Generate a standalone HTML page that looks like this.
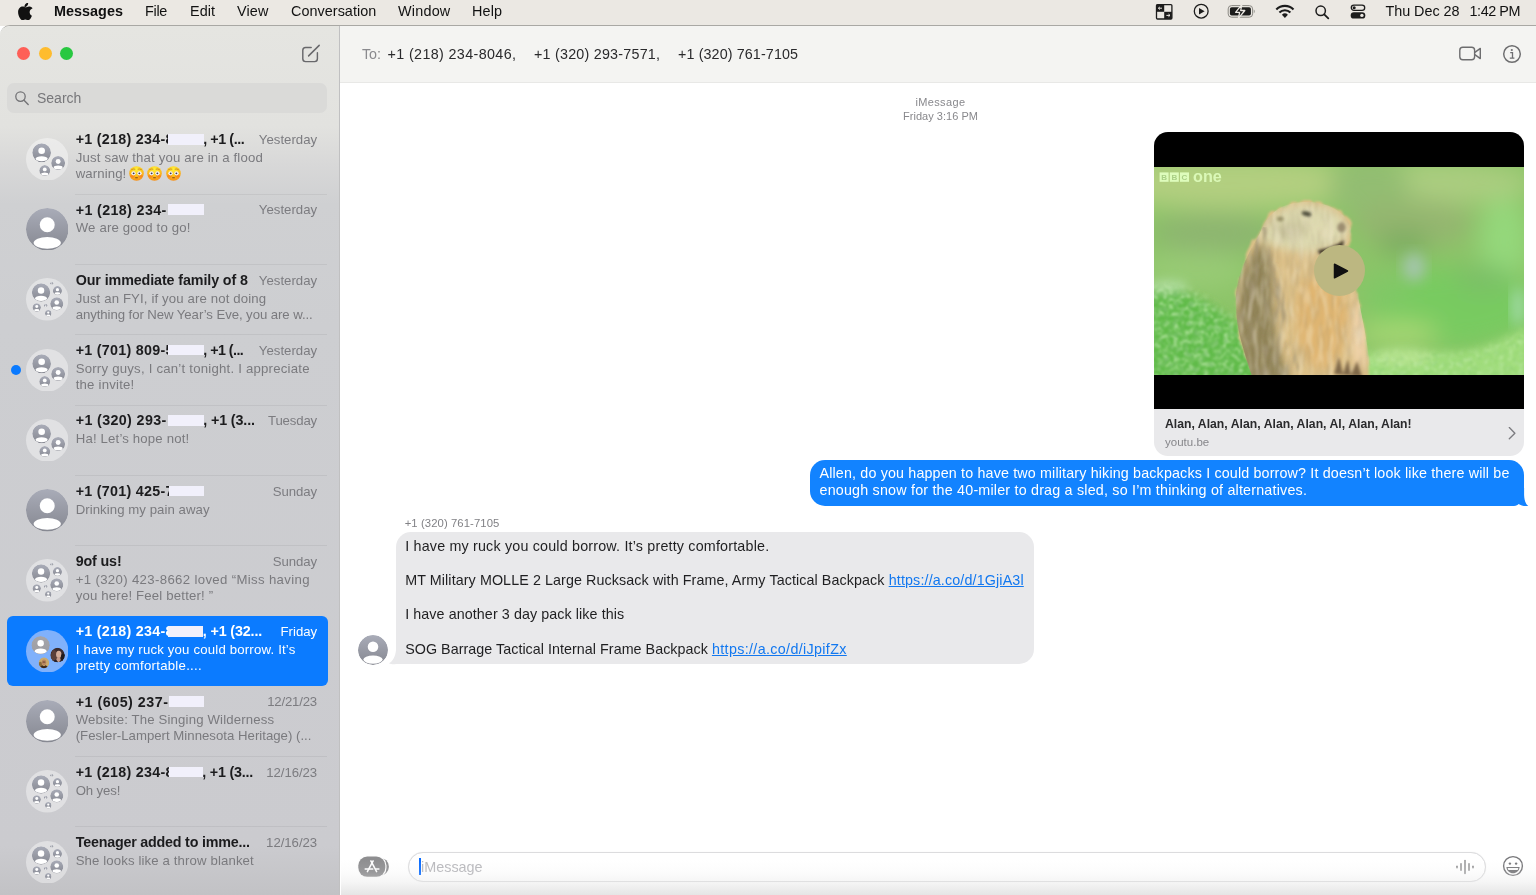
<!DOCTYPE html>
<html lang="en">
<head>
<meta charset="utf-8">
<title>Messages</title>
<style>
html,body{margin:0;padding:0}
body{width:1536px;height:895px;overflow:hidden;position:relative;background:#fff;font-family:"Liberation Sans",sans-serif;color:#1d1d1f;-webkit-font-smoothing:antialiased}
*{box-sizing:border-box}
.abs{position:absolute}
/* menu bar */
#menubar{position:absolute;left:0;top:0;width:1536px;height:26px;background:#ebe8e3}
#menubar .mi{position:absolute;top:0;height:24px;line-height:23px;color:#111;white-space:nowrap}
#menubar .b{font-weight:bold}
/* window */
#win{position:absolute;left:0;top:25px;width:1536px;height:870px;border-top:1px solid #a9a8a4;border-top-left-radius:10px;overflow:hidden;background:#fff}
#side{position:absolute;left:0;top:0;width:340px;height:870px;background:linear-gradient(180deg,#e5e5e1 0px,#e2e2df 100px,#d8d8d8 138px,#cfd0d2 178px,#cdced1 300px,#cbcbcf 820px,#c2c2c5 869px);border-right:1px solid #c0c0c1}
#toolbar{position:absolute;left:340px;top:0;width:1196px;height:57px;background:#f4f4f2;border-bottom:1px solid #e8e8e6}
.tl{position:absolute;top:21px;width:13px;height:13px;border-radius:50%}
#search{position:absolute;left:7px;top:57px;width:320px;height:30px;border-radius:7px;background:#dadad8}
#search span{position:absolute;left:30px;top:0;line-height:30px;font-size:14px;color:#77777a}
/* rows */
.row{position:absolute;left:0;width:340px;height:70px}
.row .av{position:absolute}
.nm{position:absolute;top:6.3px;font-weight:bold;line-height:18px;color:#1c1c1e;white-space:nowrap}
.dt{position:absolute;top:7px;line-height:18px;color:#7c7c80;white-space:nowrap}
.p1,.p2{position:absolute;line-height:16px;color:#7a7a7e;white-space:nowrap}
.p1{top:26px}
.p2{top:42px}
.sep{position:absolute;left:75px;right:13px;top:69.8px;height:1px;background:rgba(0,0,0,0.055)}
.red{position:absolute;top:10px;height:10.6px;background:#f1f0fb}
.sel .nm,.sel .dt,.sel .p1,.sel .p2{color:#fff}
.selbg{position:absolute;left:6.6px;top:0.2px;width:321.8px;height:70px;border-radius:6px;background:#0b7bff}
.dot{position:absolute;left:11px;top:30px;width:10px;height:10px;border-radius:50%;background:#0a7aff}
.emo{position:absolute;top:41.8px}
/* chat */
.ctr{position:absolute;left:340px;width:1196px;text-align:center;font-size:11px;color:#88888c;line-height:14px}
.tb{position:absolute;top:45px;line-height:18px;color:#2a2a2c;white-space:nowrap}
.lbl{color:#88888c;line-height:14px;white-space:nowrap}
.bub{position:absolute;line-height:17px;white-space:nowrap}
a{color:#1278f0;text-decoration:underline}
</style>
</head>
<body>
<div id="screen" style="will-change:transform;position:absolute;left:0;top:0;width:1536px;height:895px;overflow:hidden">
<svg width="0" height="0" style="position:absolute">
<defs>
<linearGradient id="pg" x1="0" y1="0" x2="0" y2="1"><stop offset="0" stop-color="#a9acb8"/><stop offset="1" stop-color="#868891"/></linearGradient>
<radialGradient id="eg" cx="0.5" cy="0.22" r="0.85"><stop offset="0" stop-color="#fff23a"/><stop offset="0.45" stop-color="#fdc81e"/><stop offset="1" stop-color="#f5861a"/></radialGradient>
<linearGradient id="pgs" x1="0" y1="0" x2="0" y2="1"><stop offset="0" stop-color="#a6a6ab"/><stop offset="1" stop-color="#9c9ca2"/></linearGradient>
<clipPath id="pc"><circle r="50"/></clipPath>
</defs>
</svg>

<div id="menubar">
  <svg class="abs" style="left:17.5px;top:2.8px" width="15.5" height="17.6" viewBox="0 0 170 200"><path fill="#111" d="M150 68c-1 1-21 12-21 37 0 29 25 39 26 40 0 1-4 14-13 27-8 12-17 24-30 24s-17-8-32-8c-15 0-20 8-32 8s-21-11-30-25C7 155-2 128-2 103c0-41 27-63 53-63 14 0 26 9 34 9 8 0 21-10 37-10 6 0 27 1 41 21zM102 30c7-8 11-19 11-30 0-2 0-3 0-4-11 0-24 7-31 16-6 7-12 18-12 29 0 2 0 3 1 4 1 0 2 0 3 0 9 0 21-6 28-15z"/></svg>
  <div class="mi b" style="left:54px;font-size:14.4px;letter-spacing:0.022px">Messages</div><div class="mi" style="left:145px;font-size:14.4px;letter-spacing:-0.301px">File</div><div class="mi" style="left:190px;font-size:14.4px;letter-spacing:0.062px">Edit</div><div class="mi" style="left:237px;font-size:14.4px;letter-spacing:0.116px">View</div><div class="mi" style="left:291px;font-size:14.4px;letter-spacing:0.041px">Conversation</div><div class="mi" style="left:398px;font-size:14.4px;letter-spacing:0.217px">Window</div><div class="mi" style="left:472px;font-size:14.4px;letter-spacing:0.128px">Help</div><div class="mi" style="left:1385.5px;font-size:14.4px;letter-spacing:-0.049px">Thu Dec 28</div><div class="mi" style="left:1469.5px;font-size:14.4px;letter-spacing:-0.438px">1:42 PM</div>

  <svg class="abs" style="left:1155px;top:3px" width="18" height="18" viewBox="0 0 18 18"><rect x="1.5" y="1.6" width="15.4" height="14.4" rx="1" fill="#ebe8e3" stroke="#1c1c1c" stroke-width="1.3"/><rect x="1.5" y="1.6" width="7.7" height="7.2" fill="#1c1c1c"/><rect x="9.2" y="8.8" width="7.7" height="7.2" fill="#1c1c1c"/><path d="M3.4 5.2h3.6M3.4 5.2l1.5-1.3M3.4 5.2l1.5 1.3M15 12.4h-3.6M15 12.4l-1.5-1.3M15 12.4l-1.5 1.3" stroke="#ebe8e3" stroke-width="1" fill="none"/></svg>
  <svg class="abs" style="left:1192px;top:2px" width="18" height="18" viewBox="0 0 18 18"><circle cx="9.2" cy="9.2" r="6.9" fill="none" stroke="#1c1c1c" stroke-width="1.3"/><path d="M7 5.9 L12.6 9.2 L7 12.5 Z" fill="#1c1c1c"/></svg>
  <svg class="abs" style="left:1226px;top:3px" width="32" height="17" viewBox="0 0 32 17"><rect x="2.2" y="2.6" width="24.4" height="11.6" rx="3.3" fill="none" stroke="#8a8883" stroke-width="1"/><rect x="3.9" y="4.3" width="21" height="8.2" rx="1.8" fill="#1c1c1c"/><path d="M27.8 6.6 V10.2 C29 9.8 29 7 27.8 6.6Z" fill="#8a8883"/><path d="M15.8 1.6 L9.6 9.3 H13.6 L12.4 15.4 L18.8 7.5 H14.7 Z" fill="#1c1c1c" stroke="#ebe8e3" stroke-width="1.3" stroke-linejoin="round"/></svg>
  <svg class="abs" style="left:1274px;top:3px" width="22" height="16" viewBox="0 0 22 16"><g fill="none" stroke="#1c1c1c" stroke-width="2.1" stroke-linecap="butt"><path d="M2.3 6.4 A12.2 12.2 0 0 1 19.5 6.4"/><path d="M5.4 9.5 A7.8 7.8 0 0 1 16.4 9.5"/></g><path d="M10.9 14.9 L7.9 11.7 A4.3 4.3 0 0 1 13.9 11.7 Z" fill="#1c1c1c"/></svg>
  <svg class="abs" style="left:1313px;top:3px" width="18" height="18" viewBox="0 0 18 18"><circle cx="7.7" cy="7.8" r="4.7" fill="none" stroke="#1c1c1c" stroke-width="1.5"/><path d="M11.2 11.3 L15.3 15.4" stroke="#1c1c1c" stroke-width="1.8" stroke-linecap="round"/></svg>
  <svg class="abs" style="left:1349px;top:3px" width="18" height="17" viewBox="0 0 18 17"><rect x="2.3" y="2.1" width="13.4" height="5.3" rx="2.65" fill="none" stroke="#1c1c1c" stroke-width="1.3"/><circle cx="5.2" cy="4.75" r="1.5" fill="#1c1c1c"/><rect x="1.7" y="9.2" width="14.6" height="6.4" rx="3.2" fill="#1c1c1c"/><circle cx="12.9" cy="12.4" r="1.7" fill="#ebe8e3"/></svg>
</div>

<div id="win">
  <div id="side">
    <div class="tl" style="left:17px;background:#fe5f57"></div>
    <div class="tl" style="left:38.5px;background:#febc2e"></div>
    <div class="tl" style="left:60px;background:#28c840"></div>
    <div id="search"><span>Search</span></div>

    <svg class="abs" style="left:301px;top:17px" width="20" height="20" viewBox="0 0 20 20"><path d="M10.2 4.5 H4.6 A2.8 2.8 0 0 0 1.8 7.3 V15.8 A2.8 2.8 0 0 0 4.6 18.6 H13.6 A2.8 2.8 0 0 0 16.4 15.8 V9.8" fill="none" stroke="#68686b" stroke-width="1.45" stroke-linecap="round"/><path d="M7.6 12.9 L18.2 2.4" fill="none" stroke="#68686b" stroke-width="1.5" stroke-linecap="round"/></svg>
    <svg class="abs" style="left:14px;top:63.5px" width="16" height="16" viewBox="0 0 16 16"><circle cx="6.5" cy="6.6" r="4.7" fill="none" stroke="#737376" stroke-width="1.3"/><path d="M10 10.2 L14.2 14.4" stroke="#737376" stroke-width="1.4" stroke-linecap="round"/></svg>
  </div>
  <div id="toolbar"></div>
</div>

<div id="rows" style="position:absolute;left:0;top:0;width:340px;height:895px;overflow:hidden">
<div class="row" style="top:124.0px"><svg class="av" style="left:25.7px;top:13.7px" width="42.5" height="42.5" viewBox="-50 -50 100 100"><circle r="50" fill="rgba(255,255,255,0.40)"/><g transform="translate(-13.18,-15.29) scale(0.4424)"><g clip-path="url(#pc)"><circle r="50" fill="url(#pg)"/><circle cx="0" cy="-10.6" r="17.6" fill="#fff"/><ellipse cx="0" cy="32" rx="32" ry="13.8" fill="#fff"/></g></g><g transform="translate(25.65,8.94) scale(0.3294)"><g clip-path="url(#pc)"><circle r="50" fill="url(#pg)"/><circle cx="0" cy="-10.6" r="17.6" fill="#fff"/><ellipse cx="0" cy="32" rx="32" ry="13.8" fill="#fff"/></g></g><g transform="translate(-5.88,26.59) scale(0.2588)"><g clip-path="url(#pc)"><circle r="50" fill="url(#pg)"/><circle cx="0" cy="-10.6" r="17.6" fill="#fff"/><ellipse cx="0" cy="32" rx="32" ry="13.8" fill="#fff"/></g></g></svg><div class="nm" style="left:75.7px;font-size:14.3px;letter-spacing:0.276px">+1 (218) 234-8</div><div class="nm" style="left:203.3px;font-size:14.3px;letter-spacing:-0.438px">, +1 (...</div><div class="red" style="left:168px;width:35.8px"></div><div class="dt" style="left:258.8px;font-size:13.2px;letter-spacing:0.022px">Yesterday</div><div class="p1" style="left:75.7px;font-size:13.2px;letter-spacing:0.172px">Just saw that you are in a flood</div><div class="p2" style="left:75.7px;font-size:13.2px;letter-spacing:0.101px">warning!</div><svg class="emo" style="left:128.8px" width="15" height="15" viewBox="0 0 32 32"><circle cx="16" cy="16" r="15.6" fill="url(#eg)"/><ellipse cx="7.5" cy="21.5" rx="5" ry="3.6" fill="#f4601e" opacity="0.45"/><ellipse cx="24.5" cy="21.5" rx="5" ry="3.6" fill="#f4601e" opacity="0.45"/><path d="M5.5 7.6 Q9 5.2 12.6 6.6 M19.4 6.6 Q23 5.2 26.5 7.6" stroke="#b9731a" stroke-width="1.5" fill="none" stroke-linecap="round"/><circle cx="9.6" cy="15.6" r="4.6" fill="#f4f2fb"/><circle cx="22.4" cy="15.6" r="4.6" fill="#f4f2fb"/><circle cx="9.9" cy="15.6" r="2" fill="#3e3a4a"/><circle cx="22.1" cy="15.6" r="2" fill="#3e3a4a"/><rect x="12.8" y="24" width="6.4" height="1.9" rx="0.95" fill="#8a4a12"/></svg><svg class="emo" style="left:147.2px" width="15" height="15" viewBox="0 0 32 32"><circle cx="16" cy="16" r="15.6" fill="url(#eg)"/><ellipse cx="7.5" cy="21.5" rx="5" ry="3.6" fill="#f4601e" opacity="0.45"/><ellipse cx="24.5" cy="21.5" rx="5" ry="3.6" fill="#f4601e" opacity="0.45"/><path d="M5.5 7.6 Q9 5.2 12.6 6.6 M19.4 6.6 Q23 5.2 26.5 7.6" stroke="#b9731a" stroke-width="1.5" fill="none" stroke-linecap="round"/><circle cx="9.6" cy="15.6" r="4.6" fill="#f4f2fb"/><circle cx="22.4" cy="15.6" r="4.6" fill="#f4f2fb"/><circle cx="9.9" cy="15.6" r="2" fill="#3e3a4a"/><circle cx="22.1" cy="15.6" r="2" fill="#3e3a4a"/><rect x="12.8" y="24" width="6.4" height="1.9" rx="0.95" fill="#8a4a12"/></svg><svg class="emo" style="left:165.5px" width="15" height="15" viewBox="0 0 32 32"><circle cx="16" cy="16" r="15.6" fill="url(#eg)"/><ellipse cx="7.5" cy="21.5" rx="5" ry="3.6" fill="#f4601e" opacity="0.45"/><ellipse cx="24.5" cy="21.5" rx="5" ry="3.6" fill="#f4601e" opacity="0.45"/><path d="M5.5 7.6 Q9 5.2 12.6 6.6 M19.4 6.6 Q23 5.2 26.5 7.6" stroke="#b9731a" stroke-width="1.5" fill="none" stroke-linecap="round"/><circle cx="9.6" cy="15.6" r="4.6" fill="#f4f2fb"/><circle cx="22.4" cy="15.6" r="4.6" fill="#f4f2fb"/><circle cx="9.9" cy="15.6" r="2" fill="#3e3a4a"/><circle cx="22.1" cy="15.6" r="2" fill="#3e3a4a"/><rect x="12.8" y="24" width="6.4" height="1.9" rx="0.95" fill="#8a4a12"/></svg><div class="sep"></div></div>
<div class="row" style="top:194.3px"><svg class="av" style="left:25.7px;top:13.7px" width="42.5" height="42.5" viewBox="-50 -50 100 100"><g transform="translate(0.00,0.00) scale(1.0000)"><g clip-path="url(#pc)"><circle r="50" fill="url(#pg)"/><circle cx="0" cy="-10.6" r="17.6" fill="#fff"/><ellipse cx="0" cy="32" rx="32" ry="13.8" fill="#fff"/></g></g></svg><div class="nm" style="left:75.7px;font-size:14.3px;letter-spacing:0.362px">+1 (218) 234-</div><div class="red" style="left:168px;width:35.8px"></div><div class="dt" style="left:258.8px;font-size:13.2px;letter-spacing:0.022px">Yesterday</div><div class="p1" style="left:75.7px;font-size:13.2px;letter-spacing:0.163px">We are good to go!</div><div class="sep"></div></div>
<div class="row" style="top:264.6px"><svg class="av" style="left:25.7px;top:13.7px" width="42.5" height="42.5" viewBox="-50 -50 100 100"><circle r="50" fill="rgba(255,255,255,0.40)"/><g transform="translate(-14.59,-16.00) scale(0.4329)"><g clip-path="url(#pc)"><circle r="50" fill="url(#pg)"/><circle cx="0" cy="-10.6" r="17.6" fill="#fff"/><ellipse cx="0" cy="32" rx="32" ry="13.8" fill="#fff"/></g></g><g transform="translate(22.35,10.82) scale(0.3106)"><g clip-path="url(#pc)"><circle r="50" fill="url(#pg)"/><circle cx="0" cy="-10.6" r="17.6" fill="#fff"/><ellipse cx="0" cy="32" rx="32" ry="13.8" fill="#fff"/></g></g><g transform="translate(24.00,-20.24) scale(0.2165)"><g clip-path="url(#pc)"><circle r="50" fill="url(#pg)"/><circle cx="0" cy="-10.6" r="17.6" fill="#fff"/><ellipse cx="0" cy="32" rx="32" ry="13.8" fill="#fff"/></g></g><g transform="translate(-24.71,19.29) scale(0.1976)"><g clip-path="url(#pc)"><circle r="50" fill="url(#pg)"/><circle cx="0" cy="-10.6" r="17.6" fill="#fff"/><ellipse cx="0" cy="32" rx="32" ry="13.8" fill="#fff"/></g></g><g transform="translate(2.35,32.94) scale(0.1506)"><g clip-path="url(#pc)"><circle r="50" fill="url(#pg)"/><circle cx="0" cy="-10.6" r="17.6" fill="#fff"/><ellipse cx="0" cy="32" rx="32" ry="13.8" fill="#fff"/></g></g><g transform="translate(-3.53,14.59) scale(0.0847)"><g clip-path="url(#pc)"><circle r="50" fill="url(#pg)"/><circle cx="0" cy="-10.6" r="17.6" fill="#fff"/><ellipse cx="0" cy="32" rx="32" ry="13.8" fill="#fff"/></g></g><g transform="translate(10.59,-37.65) scale(0.0753)"><g clip-path="url(#pc)"><circle r="50" fill="url(#pg)"/><circle cx="0" cy="-10.6" r="17.6" fill="#fff"/><ellipse cx="0" cy="32" rx="32" ry="13.8" fill="#fff"/></g></g></svg><div class="nm" style="left:75.7px;font-size:14.3px;letter-spacing:-0.105px">Our immediate family of 8</div><div class="dt" style="left:258.8px;font-size:13.2px;letter-spacing:0.022px">Yesterday</div><div class="p1" style="left:75.7px;font-size:13.2px;letter-spacing:0.132px">Just an FYI, if you are not doing</div><div class="p2" style="left:75.7px;font-size:13.2px;letter-spacing:-0.072px">anything for New Year’s Eve, you are w...</div><div class="sep"></div></div>
<div class="row" style="top:334.9px"><div class="dot"></div><svg class="av" style="left:25.7px;top:13.7px" width="42.5" height="42.5" viewBox="-50 -50 100 100"><circle r="50" fill="rgba(255,255,255,0.40)"/><g transform="translate(-13.18,-15.29) scale(0.4424)"><g clip-path="url(#pc)"><circle r="50" fill="url(#pg)"/><circle cx="0" cy="-10.6" r="17.6" fill="#fff"/><ellipse cx="0" cy="32" rx="32" ry="13.8" fill="#fff"/></g></g><g transform="translate(25.65,8.94) scale(0.3294)"><g clip-path="url(#pc)"><circle r="50" fill="url(#pg)"/><circle cx="0" cy="-10.6" r="17.6" fill="#fff"/><ellipse cx="0" cy="32" rx="32" ry="13.8" fill="#fff"/></g></g><g transform="translate(-5.88,26.59) scale(0.2588)"><g clip-path="url(#pc)"><circle r="50" fill="url(#pg)"/><circle cx="0" cy="-10.6" r="17.6" fill="#fff"/><ellipse cx="0" cy="32" rx="32" ry="13.8" fill="#fff"/></g></g></svg><div class="nm" style="left:75.7px;font-size:14.3px;letter-spacing:0.276px">+1 (701) 809-5</div><div class="nm" style="left:203.3px;font-size:14.3px;letter-spacing:-0.550px">, +1 (...</div><div class="red" style="left:168px;width:35.8px"></div><div class="dt" style="left:258.8px;font-size:13.2px;letter-spacing:0.022px">Yesterday</div><div class="p1" style="left:75.7px;font-size:13.2px;letter-spacing:0.219px">Sorry guys, I can’t tonight. I appreciate</div><div class="p2" style="left:75.7px;font-size:13.2px;letter-spacing:0.210px">the invite!</div><div class="sep"></div></div>
<div class="row" style="top:405.2px"><svg class="av" style="left:25.7px;top:13.7px" width="42.5" height="42.5" viewBox="-50 -50 100 100"><circle r="50" fill="rgba(255,255,255,0.40)"/><g transform="translate(-13.18,-15.29) scale(0.4424)"><g clip-path="url(#pc)"><circle r="50" fill="url(#pg)"/><circle cx="0" cy="-10.6" r="17.6" fill="#fff"/><ellipse cx="0" cy="32" rx="32" ry="13.8" fill="#fff"/></g></g><g transform="translate(25.65,8.94) scale(0.3294)"><g clip-path="url(#pc)"><circle r="50" fill="url(#pg)"/><circle cx="0" cy="-10.6" r="17.6" fill="#fff"/><ellipse cx="0" cy="32" rx="32" ry="13.8" fill="#fff"/></g></g><g transform="translate(-5.88,26.59) scale(0.2588)"><g clip-path="url(#pc)"><circle r="50" fill="url(#pg)"/><circle cx="0" cy="-10.6" r="17.6" fill="#fff"/><ellipse cx="0" cy="32" rx="32" ry="13.8" fill="#fff"/></g></g></svg><div class="nm" style="left:75.7px;font-size:14.3px;letter-spacing:0.362px">+1 (320) 293-</div><div class="nm" style="left:203.3px;font-size:14.3px;letter-spacing:-0.128px">, +1 (3...</div><div class="red" style="left:168px;width:35.8px"></div><div class="dt" style="left:268px;font-size:13.2px;letter-spacing:-0.157px">Tuesday</div><div class="p1" style="left:75.7px;font-size:13.2px;letter-spacing:0.168px">Ha! Let’s hope not!</div><div class="sep"></div></div>
<div class="row" style="top:475.5px"><svg class="av" style="left:25.7px;top:13.7px" width="42.5" height="42.5" viewBox="-50 -50 100 100"><g transform="translate(0.00,0.00) scale(1.0000)"><g clip-path="url(#pc)"><circle r="50" fill="url(#pg)"/><circle cx="0" cy="-10.6" r="17.6" fill="#fff"/><ellipse cx="0" cy="32" rx="32" ry="13.8" fill="#fff"/></g></g></svg><div class="nm" style="left:75.7px;font-size:14.3px;letter-spacing:0.276px">+1 (701) 425-7</div><div class="red" style="left:168.6px;width:35.2px"></div><div class="dt" style="left:272.7px;font-size:13.2px;letter-spacing:-0.054px">Sunday</div><div class="p1" style="left:75.7px;font-size:13.2px;letter-spacing:0.061px">Drinking my pain away</div><div class="sep"></div></div>
<div class="row" style="top:545.8px"><svg class="av" style="left:25.7px;top:13.7px" width="42.5" height="42.5" viewBox="-50 -50 100 100"><circle r="50" fill="rgba(255,255,255,0.40)"/><g transform="translate(-14.59,-16.00) scale(0.4329)"><g clip-path="url(#pc)"><circle r="50" fill="url(#pg)"/><circle cx="0" cy="-10.6" r="17.6" fill="#fff"/><ellipse cx="0" cy="32" rx="32" ry="13.8" fill="#fff"/></g></g><g transform="translate(22.35,10.82) scale(0.3106)"><g clip-path="url(#pc)"><circle r="50" fill="url(#pg)"/><circle cx="0" cy="-10.6" r="17.6" fill="#fff"/><ellipse cx="0" cy="32" rx="32" ry="13.8" fill="#fff"/></g></g><g transform="translate(24.00,-20.24) scale(0.2165)"><g clip-path="url(#pc)"><circle r="50" fill="url(#pg)"/><circle cx="0" cy="-10.6" r="17.6" fill="#fff"/><ellipse cx="0" cy="32" rx="32" ry="13.8" fill="#fff"/></g></g><g transform="translate(-24.71,19.29) scale(0.1976)"><g clip-path="url(#pc)"><circle r="50" fill="url(#pg)"/><circle cx="0" cy="-10.6" r="17.6" fill="#fff"/><ellipse cx="0" cy="32" rx="32" ry="13.8" fill="#fff"/></g></g><g transform="translate(2.35,32.94) scale(0.1506)"><g clip-path="url(#pc)"><circle r="50" fill="url(#pg)"/><circle cx="0" cy="-10.6" r="17.6" fill="#fff"/><ellipse cx="0" cy="32" rx="32" ry="13.8" fill="#fff"/></g></g><g transform="translate(-3.53,14.59) scale(0.0847)"><g clip-path="url(#pc)"><circle r="50" fill="url(#pg)"/><circle cx="0" cy="-10.6" r="17.6" fill="#fff"/><ellipse cx="0" cy="32" rx="32" ry="13.8" fill="#fff"/></g></g><g transform="translate(10.59,-37.65) scale(0.0753)"><g clip-path="url(#pc)"><circle r="50" fill="url(#pg)"/><circle cx="0" cy="-10.6" r="17.6" fill="#fff"/><ellipse cx="0" cy="32" rx="32" ry="13.8" fill="#fff"/></g></g></svg><div class="nm" style="left:75.7px;font-size:14.3px;letter-spacing:-0.146px">9of us!</div><div class="dt" style="left:272.7px;font-size:13.2px;letter-spacing:-0.054px">Sunday</div><div class="p1" style="left:75.7px;font-size:13.2px;letter-spacing:0.344px">+1 (320) 423-8662 loved “Miss having</div><div class="p2" style="left:75.7px;font-size:13.2px;letter-spacing:0.177px">you here! Feel better! ”</div></div>
<div class="row sel" style="top:616.1px"><div class="selbg"></div><svg class="av" style="left:25.7px;top:13.7px" width="42.5" height="42.5" viewBox="-50 -50 100 100"><circle r="50" fill="#80b1fb"/><g transform="translate(-15.53,-14.12) scale(0.4329)"><g clip-path="url(#pc)"><circle r="50" fill="url(#pgs)"/><circle cx="0" cy="-10.6" r="17.6" fill="#fff"/><ellipse cx="0" cy="32" rx="32" ry="13.8" fill="#fff"/></g></g><g transform="translate(24.24,8.94) scale(2.3529)"><clipPath id="cp1"><circle r="7.3"/></clipPath><g clip-path="url(#cp1)"><circle r="7.3" fill="#3a2b2e"/><ellipse cx="-3.5" cy="1" rx="3" ry="6" fill="#5a3f3a"/><ellipse cx="1.2" cy="-0.6" rx="2.7" ry="3.6" fill="#d2ab98"/><ellipse cx="1.0" cy="4.6" rx="2.2" ry="2.6" fill="#c69a88"/><ellipse cx="5.6" cy="3.5" rx="2.4" ry="5" fill="#1f1a1e"/><path d="M-7 7.5 L-2 4.5 L1 7.5 L4 4.5 L8 7.5 Z" fill="#24202a"/></g></g><g transform="translate(-7.76,27.06) scale(2.3529)"><clipPath id="cp2"><circle r="5.4"/></clipPath><g clip-path="url(#cp2)"><circle r="5.4" fill="#c9aa6c"/><ellipse cx="0" cy="-0.4" rx="2.3" ry="2.9" fill="#b98560"/><ellipse cx="-3.6" cy="2.5" rx="1.6" ry="3.4" fill="#8a6a3a"/><path d="M-6 6 L-1.6 2.6 L0 3.6 L1.8 2.6 L6 6 Z" fill="#3b2417"/><ellipse cx="0" cy="-0.8" rx="1.6" ry="0.5" fill="#5b3a28"/></g></g></svg><div class="nm" style="left:75.7px;font-size:14.3px;letter-spacing:0.276px">+1 (218) 234-8</div><div class="nm" style="left:202.8px;font-size:14.3px;letter-spacing:-0.141px">, +1 (32...</div><div class="red" style="left:167.5px;width:35.8px"></div><div class="dt" style="left:280.5px;font-size:13.2px;letter-spacing:0.005px">Friday</div><div class="p1" style="left:75.7px;font-size:13.2px;letter-spacing:0.182px">I have my ruck you could borrow. It’s</div><div class="p2" style="left:75.7px;font-size:13.2px;letter-spacing:0.275px">pretty comfortable....</div></div>
<div class="row" style="top:686.4px"><svg class="av" style="left:25.7px;top:13.7px" width="42.5" height="42.5" viewBox="-50 -50 100 100"><g transform="translate(0.00,0.00) scale(1.0000)"><g clip-path="url(#pc)"><circle r="50" fill="url(#pg)"/><circle cx="0" cy="-10.6" r="17.6" fill="#fff"/><ellipse cx="0" cy="32" rx="32" ry="13.8" fill="#fff"/></g></g></svg><div class="nm" style="left:75.7px;font-size:14.3px;letter-spacing:0.504px">+1 (605) 237-</div><div class="red" style="left:168.8px;width:35.0px"></div><div class="dt" style="left:267.2px;font-size:13.2px;letter-spacing:-0.198px">12/21/23</div><div class="p1" style="left:75.7px;font-size:13.2px;letter-spacing:0.155px">Website: The Singing Wilderness</div><div class="p2" style="left:75.7px;font-size:13.2px;letter-spacing:0.013px">(Fesler-Lampert Minnesota Heritage) (...</div><div class="sep"></div></div>
<div class="row" style="top:756.7px"><svg class="av" style="left:25.7px;top:13.7px" width="42.5" height="42.5" viewBox="-50 -50 100 100"><circle r="50" fill="rgba(255,255,255,0.40)"/><g transform="translate(-14.59,-16.00) scale(0.4329)"><g clip-path="url(#pc)"><circle r="50" fill="url(#pg)"/><circle cx="0" cy="-10.6" r="17.6" fill="#fff"/><ellipse cx="0" cy="32" rx="32" ry="13.8" fill="#fff"/></g></g><g transform="translate(22.35,10.82) scale(0.3106)"><g clip-path="url(#pc)"><circle r="50" fill="url(#pg)"/><circle cx="0" cy="-10.6" r="17.6" fill="#fff"/><ellipse cx="0" cy="32" rx="32" ry="13.8" fill="#fff"/></g></g><g transform="translate(24.00,-20.24) scale(0.2165)"><g clip-path="url(#pc)"><circle r="50" fill="url(#pg)"/><circle cx="0" cy="-10.6" r="17.6" fill="#fff"/><ellipse cx="0" cy="32" rx="32" ry="13.8" fill="#fff"/></g></g><g transform="translate(-24.71,19.29) scale(0.1976)"><g clip-path="url(#pc)"><circle r="50" fill="url(#pg)"/><circle cx="0" cy="-10.6" r="17.6" fill="#fff"/><ellipse cx="0" cy="32" rx="32" ry="13.8" fill="#fff"/></g></g><g transform="translate(2.35,32.94) scale(0.1506)"><g clip-path="url(#pc)"><circle r="50" fill="url(#pg)"/><circle cx="0" cy="-10.6" r="17.6" fill="#fff"/><ellipse cx="0" cy="32" rx="32" ry="13.8" fill="#fff"/></g></g><g transform="translate(-3.53,14.59) scale(0.0847)"><g clip-path="url(#pc)"><circle r="50" fill="url(#pg)"/><circle cx="0" cy="-10.6" r="17.6" fill="#fff"/><ellipse cx="0" cy="32" rx="32" ry="13.8" fill="#fff"/></g></g><g transform="translate(10.59,-37.65) scale(0.0753)"><g clip-path="url(#pc)"><circle r="50" fill="url(#pg)"/><circle cx="0" cy="-10.6" r="17.6" fill="#fff"/><ellipse cx="0" cy="32" rx="32" ry="13.8" fill="#fff"/></g></g></svg><div class="nm" style="left:75.7px;font-size:14.3px;letter-spacing:0.276px">+1 (218) 234-8</div><div class="nm" style="left:202.2px;font-size:14.3px;letter-spacing:-0.195px">, +1 (3...</div><div class="red" style="left:168.8px;width:33.9px"></div><div class="dt" style="left:266.3px;font-size:13.2px;letter-spacing:-0.069px">12/16/23</div><div class="p1" style="left:75.7px;font-size:13.2px;letter-spacing:-0.114px">Oh yes!</div><div class="sep"></div></div>
<div class="row" style="top:827.0px"><svg class="av" style="left:25.7px;top:13.7px" width="42.5" height="42.5" viewBox="-50 -50 100 100"><circle r="50" fill="rgba(255,255,255,0.40)"/><g transform="translate(-14.59,-16.00) scale(0.4329)"><g clip-path="url(#pc)"><circle r="50" fill="url(#pg)"/><circle cx="0" cy="-10.6" r="17.6" fill="#fff"/><ellipse cx="0" cy="32" rx="32" ry="13.8" fill="#fff"/></g></g><g transform="translate(22.35,10.82) scale(0.3106)"><g clip-path="url(#pc)"><circle r="50" fill="url(#pg)"/><circle cx="0" cy="-10.6" r="17.6" fill="#fff"/><ellipse cx="0" cy="32" rx="32" ry="13.8" fill="#fff"/></g></g><g transform="translate(24.00,-20.24) scale(0.2165)"><g clip-path="url(#pc)"><circle r="50" fill="url(#pg)"/><circle cx="0" cy="-10.6" r="17.6" fill="#fff"/><ellipse cx="0" cy="32" rx="32" ry="13.8" fill="#fff"/></g></g><g transform="translate(-24.71,19.29) scale(0.1976)"><g clip-path="url(#pc)"><circle r="50" fill="url(#pg)"/><circle cx="0" cy="-10.6" r="17.6" fill="#fff"/><ellipse cx="0" cy="32" rx="32" ry="13.8" fill="#fff"/></g></g><g transform="translate(2.35,32.94) scale(0.1506)"><g clip-path="url(#pc)"><circle r="50" fill="url(#pg)"/><circle cx="0" cy="-10.6" r="17.6" fill="#fff"/><ellipse cx="0" cy="32" rx="32" ry="13.8" fill="#fff"/></g></g><g transform="translate(-3.53,14.59) scale(0.0847)"><g clip-path="url(#pc)"><circle r="50" fill="url(#pg)"/><circle cx="0" cy="-10.6" r="17.6" fill="#fff"/><ellipse cx="0" cy="32" rx="32" ry="13.8" fill="#fff"/></g></g><g transform="translate(10.59,-37.65) scale(0.0753)"><g clip-path="url(#pc)"><circle r="50" fill="url(#pg)"/><circle cx="0" cy="-10.6" r="17.6" fill="#fff"/><ellipse cx="0" cy="32" rx="32" ry="13.8" fill="#fff"/></g></g></svg><div class="nm" style="left:75.7px;font-size:14.3px;letter-spacing:-0.209px">Teenager added to imme...</div><div class="dt" style="left:266.1px;font-size:13.2px;letter-spacing:-0.040px">12/16/23</div><div class="p1" style="left:75.7px;font-size:13.2px;letter-spacing:0.123px">She looks like a throw blanket</div></div>
</div>


<div id="main" style="position:absolute;left:340px;top:0;width:1196px;height:895px">
  <!-- toolbar content -->
  <div class="tb" style="left:22px;font-size:14.3px;letter-spacing:-0.038px;color:#8a8a8e">To:</div><div class="tb" style="left:47.5px;font-size:14.3px;letter-spacing:0.380px;">+1 (218) 234-8046,</div><div class="tb" style="left:194px;font-size:14.3px;letter-spacing:0.233px;">+1 (320) 293-7571,</div><div class="tb" style="left:338px;font-size:14.3px;letter-spacing:0.121px;">+1 (320) 761-7105</div>
  <svg class="abs" style="left:1118px;top:45.4px" width="25" height="18" viewBox="0 0 25 18"><rect x="1.8" y="2.2" width="14.8" height="12.6" rx="3" fill="none" stroke="#6d6d6f" stroke-width="1.4"/><path d="M16.9 7.4 L22.3 3.4 V13.6 L16.9 9.6" fill="none" stroke="#6d6d6f" stroke-width="1.4" stroke-linejoin="round"/></svg>
  <svg class="abs" style="left:1162px;top:44px" width="20" height="20" viewBox="0 0 20 20"><circle cx="10" cy="10" r="8.3" fill="none" stroke="#6d6d6f" stroke-width="1.45"/><circle cx="9.8" cy="6" r="1.1" fill="#6e6e72"/><path d="M8.2 8.6h2.3v5.4M7.8 14.2h4.6" fill="none" stroke="#6e6e72" stroke-width="1.3"/></svg>

  <div class="abs lbl" style="left:575.5px;top:95px;font-size:11px;letter-spacing:0.346px">iMessage</div>
  <div class="abs lbl" style="left:563px;top:109px;font-size:11px;letter-spacing:0.032px">Friday 3:16 PM</div>

  <!-- link preview card -->
  <div id="card" style="position:absolute;left:814px;top:132.2px;width:370px;height:324px;border-radius:14px;overflow:hidden;background:#e9e9eb">
    <div style="position:absolute;left:0;top:0;width:370px;height:277px;background:#000"></div>
    <svg style="position:absolute;left:0;top:34.4px" width="370" height="208" viewBox="0 0 370 208">
<defs>
<filter id="b12" x="-30%" y="-30%" width="160%" height="160%"><feGaussianBlur stdDeviation="12"/></filter>
<filter id="b7" x="-30%" y="-30%" width="160%" height="160%"><feGaussianBlur stdDeviation="7"/></filter>
<filter id="b4" x="-30%" y="-30%" width="160%" height="160%"><feGaussianBlur stdDeviation="4"/></filter>
<filter id="b25" x="-30%" y="-30%" width="160%" height="160%"><feGaussianBlur stdDeviation="2.5"/></filter>
<filter id="b15" x="-30%" y="-30%" width="160%" height="160%"><feGaussianBlur stdDeviation="1.5"/></filter>
<filter id="b08" x="-30%" y="-30%" width="160%" height="160%"><feGaussianBlur stdDeviation="0.8"/></filter>
<filter id="furedge" x="-10%" y="-10%" width="120%" height="120%"><feTurbulence type="fractalNoise" baseFrequency="0.11 0.05" numOctaves="2" seed="4" result="n"/><feDisplacementMap in="SourceGraphic" in2="n" scale="10" xChannelSelector="R" yChannelSelector="G"/><feGaussianBlur stdDeviation="1.1"/></filter>
<filter id="furtex" x="0" y="0" width="100%" height="100%"><feTurbulence type="fractalNoise" baseFrequency="0.22 0.045" numOctaves="2" seed="11" result="n"/><feColorMatrix in="n" type="matrix" values="0 0 0 0 0.36  0 0 0 0 0.30  0 0 0 0 0.18  2.6 2.0 0 0 -2.05" result="c"/><feComposite in="c" in2="SourceGraphic" operator="in"/><feGaussianBlur stdDeviation="0.8"/></filter>
<filter id="furlight" x="0" y="0" width="100%" height="100%"><feTurbulence type="fractalNoise" baseFrequency="0.2 0.05" numOctaves="2" seed="23" result="n"/><feColorMatrix in="n" type="matrix" values="0 0 0 0 0.97  0 0 0 0 0.90  0 0 0 0 0.70  2.4 2.0 0 0 -2.0" result="c"/><feComposite in="c" in2="SourceGraphic" operator="in"/><feGaussianBlur stdDeviation="0.8"/></filter>
<filter id="grass" x="-10%" y="-10%" width="120%" height="120%"><feGaussianBlur in="SourceAlpha" stdDeviation="3.5" result="m"/><feTurbulence type="fractalNoise" baseFrequency="0.2 0.22" numOctaves="2" seed="7" result="n"/><feColorMatrix in="n" type="matrix" values="0 0 0 0 0.64  0 0 0 0 0.90  0 0 0 0 0.52  2.6 2.2 0 0 -2.2" result="c"/><feComposite in="c" in2="m" operator="in"/><feGaussianBlur stdDeviation="0.8"/></filter>
<filter id="grassd" x="-10%" y="-10%" width="120%" height="120%"><feGaussianBlur in="SourceAlpha" stdDeviation="3.5" result="m"/><feTurbulence type="fractalNoise" baseFrequency="0.2 0.2" numOctaves="2" seed="31" result="n"/><feColorMatrix in="n" type="matrix" values="0 0 0 0 0.20  0 0 0 0 0.52  0 0 0 0 0.16  2.8 2.4 0 0 -2.55" result="c"/><feComposite in="c" in2="m" operator="in"/><feGaussianBlur stdDeviation="0.8"/></filter>
<clipPath id="imgclip"><rect width="370" height="208"/></clipPath>
<clipPath id="bodyclip"><path d="M100 215 C92 190 80 160 82 128 C84 104 96 84 106 66 C112 48 126 36 150 35 C172 34 190 44 196 58 C199 66 196 74 190 80 C196 92 202 112 205 135 C210 160 216 185 216 215 Z"/></clipPath>
</defs>
<g clip-path="url(#imgclip)">
<rect width="370" height="208" fill="#8cc468"/>
<!-- background blobs -->
<g filter="url(#b12)">
<ellipse cx="80" cy="16" rx="140" ry="26" fill="#b3cf80"/>
<ellipse cx="280" cy="16" rx="100" ry="22" fill="#abcd80"/>
<ellipse cx="215" cy="20" rx="40" ry="30" fill="#93bd72"/>
<ellipse cx="60" cy="66" rx="62" ry="20" fill="#8db570"/>
<ellipse cx="40" cy="104" rx="55" ry="20" fill="#98cb74"/>
<ellipse cx="260" cy="56" rx="60" ry="24" fill="#94b670"/>
<ellipse cx="250" cy="76" rx="26" ry="12" fill="#7aab60"/>
<ellipse cx="350" cy="75" rx="24" ry="45" fill="#94d87c"/>
<ellipse cx="300" cy="140" rx="85" ry="40" fill="#78cb60"/>
<ellipse cx="245" cy="166" rx="40" ry="12" fill="#a8d874"/>
<ellipse cx="330" cy="112" rx="30" ry="14" fill="#7abf66"/>
<ellipse cx="232" cy="124" rx="25" ry="18" fill="#80c866"/>
</g>
<ellipse cx="260" cy="100" rx="11" ry="14" fill="#a4c6ac" filter="url(#b7)"/>
<ellipse cx="364" cy="140" rx="6" ry="20" fill="#a6dcae" filter="url(#b7)"/>
<!-- bottom grass strip right -->
<g filter="url(#b4)">
<path d="M205 188 C240 180 280 186 310 184 C335 180 355 168 375 160 L375 215 L205 215 Z" fill="#9fdc7a"/>
<ellipse cx="248" cy="190" rx="30" ry="9" fill="#b4e28c"/>
</g>
<path d="M205 190 C240 182 280 188 310 186 C335 182 355 170 375 162 L375 215 L205 215 Z" fill="#fff" filter="url(#grass)" opacity="0.35"/>
<path d="M205 190 C240 182 280 188 310 186 C335 182 355 170 375 162 L375 215 L205 215 Z" fill="#fff" filter="url(#grassd)" opacity="0.25"/>
<!-- grass clump left -->
<g filter="url(#b4)">
<path d="M-10 128 C10 118 40 126 60 140 C80 152 95 165 110 215 L-10 215 Z" fill="#60bb4a"/>
<ellipse cx="14" cy="119" rx="20" ry="7" fill="#a9d894"/>
</g>
<path d="M-10 124 C10 112 40 122 62 138 C82 150 97 165 112 215 L-10 215 Z" fill="#fff" filter="url(#grass)" opacity="0.6"/>
<path d="M-10 128 C10 118 40 126 60 140 C80 152 95 165 110 215 L-10 215 Z" fill="#fff" filter="url(#grassd)" opacity="0.7"/>
<!-- marmot body -->
<g filter="url(#furedge)">
<path d="M100 215 C92 190 80 160 82 128 C84 104 96 84 106 66 C112 48 126 36 150 35 C172 34 190 44 196 58 C199 66 196 74 190 80 C196 92 202 112 205 135 C210 160 216 185 216 215 Z" fill="#dcc088"/>
</g>
<g filter="url(#b4)" clip-path="url(#bodyclip)">
<path d="M106 72 C110 50 128 38 150 37 C172 36 188 46 194 58 C196 68 190 76 182 80 C160 88 128 86 106 72 Z" fill="#dcd8ae"/>
<path d="M90 215 C82 170 80 140 86 115 C92 95 100 82 110 74 C122 100 118 130 122 160 C124 185 132 200 136 215 Z" fill="#918459"/>
<ellipse cx="168" cy="150" rx="26" ry="52" fill="#e0b672"/>
<ellipse cx="150" cy="100" rx="22" ry="14" fill="#dcc088"/>
<ellipse cx="205" cy="168" rx="7" ry="34" fill="#f1d4ac"/>
<ellipse cx="136" cy="64" rx="14" ry="8" fill="#c4be98"/>
<ellipse cx="170" cy="66" rx="12" ry="8" fill="#e2dcb4"/>
</g>
<g clip-path="url(#bodyclip)"><path d="M78 215 L78 60 L112 60 C130 100 128 150 150 215 Z" fill="#fff" filter="url(#furtex)" opacity="0.7"/><rect x="78" y="30" width="142" height="180" fill="#fff" filter="url(#furtex)" opacity="0.22"/></g>
<rect x="78" y="30" width="142" height="180" clip-path="url(#bodyclip)" fill="#fff" filter="url(#furlight)" opacity="0.3"/>
<g filter="url(#b15)">
<ellipse cx="152.5" cy="46.8" rx="5" ry="2.3" fill="#4a4838" transform="rotate(14 152.5 46.8)"/>
<ellipse cx="126.3" cy="52" rx="3.4" ry="2.4" fill="#989068"/>
<ellipse cx="187.5" cy="60.5" rx="4.2" ry="5" fill="#9b8d70"/>
<path d="M164 83 C172 82 182 79 190 73 L189 79 C183 86 172 89 165 87 Z" fill="#43382a"/>
<path d="M180 207 L185 190 L189 207 L194 192 L197 208 L203 194 L208 210 Z" fill="#80694a"/>
</g>
</g>
<!-- BBC one logo -->
<g font-family="Liberation Sans, sans-serif" fill="#defcbc">
<rect x="5.6" y="5.4" width="9" height="9.4" fill="#defcbc"/><rect x="15.8" y="5.4" width="9" height="9.4" fill="#defcbc"/><rect x="26" y="5.4" width="9" height="9.4" fill="#defcbc"/>
<text x="7.3" y="13" font-size="8" font-weight="bold" fill="#a9cf85">B</text><text x="17.5" y="13" font-size="8" font-weight="bold" fill="#a9cf85">B</text><text x="27.6" y="13" font-size="8" font-weight="bold" fill="#a9cf85">C</text>
<text x="39" y="14.9" font-size="16.5" font-weight="bold" textLength="28.8" lengthAdjust="spacingAndGlyphs" opacity="0.92">one</text>
</g>
</svg>

    <div style="position:absolute;left:160px;top:113px;width:51px;height:51px;border-radius:50%;background:#bcb781"></div>
    <svg style="position:absolute;left:178px;top:130px" width="18" height="18" viewBox="0 0 18 18"><path d="M2.5 2.2 L15.5 9 L2.5 15.8 Z" fill="#111" stroke="#111" stroke-width="1.5" stroke-linejoin="round"/></svg>
    <div style="position:absolute;left:10.9px;top:284.8px;font-weight:bold;color:#2a2a2c;line-height:15px;white-space:nowrap;font-size:12.2px;letter-spacing:0.032px">Alan, Alan, Alan, Alan, Alan, Al, Alan, Alan!</div>
    <div style="position:absolute;left:11px;top:302.4px;color:#86868a;line-height:14px;white-space:nowrap;font-size:11.5px;letter-spacing:0.011px">youtu.be</div>
    <svg style="position:absolute;left:353px;top:293.8px" width="10" height="14" viewBox="0 0 10 14"><path d="M2.3 1.6 L7.9 7.2 L2.3 12.8" fill="none" stroke="#7c7c80" stroke-width="1.35" stroke-linecap="round" stroke-linejoin="round"/></svg>
  </div>

  <!-- blue bubble -->
  <div class="bub" style="left:469.5px;top:459.7px;width:714.6px;height:46px;border-radius:15px;background:#1283ff;color:#fff">
    <div style="position:absolute;left:10px;top:5.5px;font-size:14.3px;letter-spacing:0.155px">Allen, do you happen to have two military hiking backpacks I could borrow? It doesn’t look like there will be</div><div style="position:absolute;left:10px;top:22.5px;font-size:14.3px;letter-spacing:0.202px">enough snow for the 40-miler to drag a sled, so I’m thinking of alternatives.</div>
  </div>
  <svg class="abs" style="left:1166px;top:487.7px" width="24" height="19" viewBox="0 0 24 19"><path d="M0 18 H8 C10.5 18 11.6 16.9 12.6 16 C14.6 17.6 18.6 18.4 22.2 17.9 C19.6 16.2 18.3 12.5 18.1 7 L18.1 0 L0 0 Z" fill="#1283ff"/></svg>

  <div class="abs" style="left:64.7px;top:515.5px;line-height:14px;color:#818185;white-space:nowrap;font-size:11.3px;letter-spacing:0.087px">+1 (320) 761-7105</div>

  <!-- grey bubble -->
  <svg class="abs" style="left:48px;top:646px" width="22" height="19" viewBox="0 0 22 19"><path d="M22 18 C16 18 12 18 8 18 C6 18.5 3 18.3 1 17.2 C4.5 15.5 7.4 11 8 4 L8 0 L22 0 Z" fill="#e9e9eb"/></svg>
  <div class="bub" style="left:55.5px;top:532px;width:638px;height:132px;border-radius:15px;background:#e9e9eb;color:#1f1f21">
    <div style="position:absolute;left:9.7px;top:6px;font-size:14.3px;letter-spacing:0.189px">I have my ruck you could borrow. It’s pretty comfortable.</div><div style="position:absolute;left:9.7px;top:40px;font-size:14.3px;letter-spacing:0.093px">MT Military MOLLE 2 Large Rucksack with Frame, Army Tactical Backpack <a style="font-size:14.3px;letter-spacing:0.145px">https://a.co/d/1GjiA3l</a></div><div style="position:absolute;left:9.7px;top:74.4px;font-size:14.3px;letter-spacing:0.082px">I have another 3 day pack like this</div><div style="position:absolute;left:9.7px;top:108.8px;font-size:14.3px;letter-spacing:0.042px">SOG Barrage Tactical Internal Frame Backpack <a style="font-size:14.3px;letter-spacing:0.349px">https://a.co/d/iJpifZx</a></div>
  </div>
  <svg class="abs" style="left:17.5px;top:635px" width="30" height="30" viewBox="-50 -50 100 100"><g clip-path="url(#pc)"><circle r="50" fill="url(#pg)"/><circle cx="0" cy="-10.6" r="17.6" fill="#fff"/><ellipse cx="0" cy="32" rx="32" ry="13.8" fill="#fff"/></g></svg>

  <!-- input bar -->
  <svg class="abs" style="left:16px;top:854px" width="38" height="25" viewBox="0 0 38 25"><rect x="8" y="3.7" width="24.9" height="17.9" rx="8.95" fill="#8f8f91"/><rect x="1.2" y="1.4" width="29.3" height="22.5" rx="10" fill="#fdfdfd"/><rect x="2.3" y="2.5" width="27" height="20.3" rx="9" fill="#8e8e90"/><g stroke="#fff" stroke-width="1.5" stroke-linecap="round" fill="none"><path d="M11.4 17.6 L17.1 6.8"/><path d="M20.6 17.6 L14.9 6.8"/><path d="M9.2 15.1 H16.8"/><path d="M19.6 15.1 H22.9"/></g></svg>
  <div class="abs" style="left:68px;top:852px;width:1078px;height:30px;border-radius:15px;border:1px solid #dcdcde;box-shadow:0 0 1px rgba(0,0,0,0.10);background:#fff"></div>
  <div class="abs" style="left:79px;top:858px;width:2px;height:17px;background:#0a6cff"></div>
  <div class="abs" style="left:81px;top:858px;font-size:14.4px;line-height:18px;color:#b9b9bd">iMessage</div>
  <svg class="abs" style="left:1115px;top:858px" width="20" height="18" viewBox="0 0 20 18"><g stroke="#8a8a8c" stroke-width="1.4" stroke-linecap="round"><path d="M2 8.2V9.8"/><path d="M6 5.8V12.2"/><path d="M10 2.5V15.5"/><path d="M14 5.8V12.2"/><path d="M18 8.2V9.8"/></g></svg>
  <svg class="abs" style="left:1162px;top:855.4px" width="22" height="22" viewBox="0 0 22 22"><circle cx="11" cy="11" r="9.4" fill="none" stroke="#77777a" stroke-width="1.4"/><circle cx="7.9" cy="8.6" r="1.2" fill="#77777a"/><circle cx="14.1" cy="8.6" r="1.2" fill="#77777a"/><path d="M4.4 12 H17.6 C17.2 15.9 14.4 18.3 11 18.3 C7.6 18.3 4.8 15.9 4.4 12 Z" fill="#77777a"/><path d="M5.7 13 H16.3 C16.2 13.8 16 14.4 15.7 15 H6.3 C6 14.4 5.8 13.8 5.7 13 Z" fill="#fbfbfb"/></svg>
</div>
<div class="abs" style="left:341px;top:860px;width:1195px;height:35px;background:linear-gradient(180deg,rgba(230,230,230,0) 0,rgba(230,230,230,0.12) 12px,rgba(230,230,230,0.38) 22px,rgba(229,229,229,1) 35px);pointer-events:none"></div>

</div>
</body>
</html>
